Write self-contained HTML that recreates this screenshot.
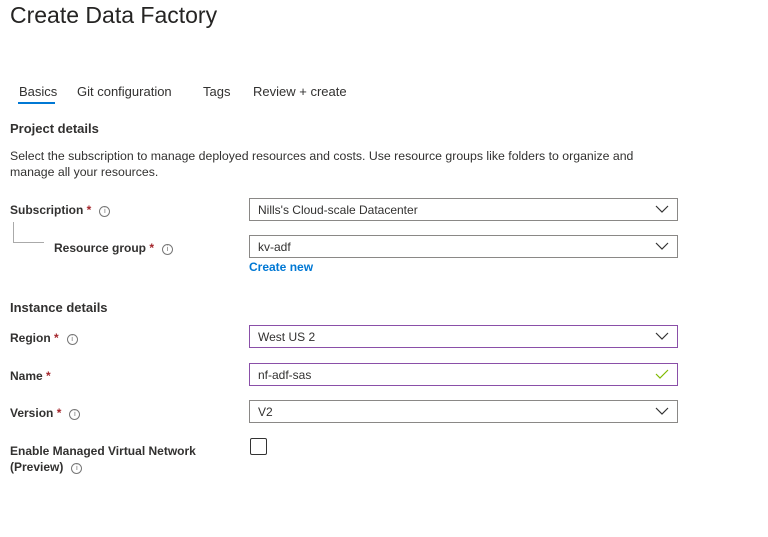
<!DOCTYPE html>
<html><head><style>
body{margin:0;width:768px;height:537px;background:#fff;font-family:"Liberation Sans",sans-serif;color:#323130;position:relative;overflow:hidden}
.a{position:absolute;white-space:nowrap}
h1{position:absolute;left:10px;top:2px;margin:0;font-size:23px;font-weight:normal;color:#252423}
.t{font-size:13px;top:84px}
.lbl{font-size:12px;font-weight:bold;color:#323130}
.req{color:#a4262c}
.info{display:inline-block;width:9px;height:9px;border:1px solid #777;border-radius:50%;font-size:7px;line-height:9px;text-align:center;color:#666;font-weight:normal;vertical-align:1px;margin-left:8px}
.box{position:absolute;left:249px;height:21px;border:1px solid #8a8886;font-size:12px;line-height:22px;padding-left:8px;box-sizing:content-box;width:419px}
.box.p{border-color:#8a4fa8}
.chev{position:absolute;right:8px;top:5px}
</style></head><body>
<h1>Create Data Factory</h1>
<div class="a t" style="left:19px;color:#323130">Basics</div>
<div class="a" style="left:18px;top:102px;width:37px;height:2px;background:#0078d4"></div>
<div class="a t" style="left:77px">Git configuration</div>
<div class="a t" style="left:203px">Tags</div>
<div class="a t" style="left:253px">Review + create</div>
<div class="a" style="left:10px;top:121px;font-size:13px;font-weight:bold">Project details</div>
<div class="a" style="left:10px;top:148px;font-size:12.3px;line-height:16px;white-space:normal;width:640px">Select the subscription to manage deployed resources and costs. Use resource groups like folders to organize and manage all your resources.</div>
<div class="a lbl" style="left:10px;top:203px">Subscription <span class="req">*</span><span class="info">i</span></div>
<div class="a" style="left:13px;top:222px;width:30px;height:20px;border-left:1px solid #aaa;border-bottom:1px solid #aaa"></div>
<div class="a lbl" style="left:54px;top:241px">Resource group <span class="req">*</span><span class="info">i</span></div>
<div class="box" style="top:198px">Nills's Cloud-scale Datacenter<svg class="chev" width="14" height="10"><path d="M1 2l6 6 6-6" fill="none" stroke="#333" stroke-width="1.2"/></svg></div>
<div class="box" style="top:235px">kv-adf<svg class="chev" width="14" height="10"><path d="M1 2l6 6 6-6" fill="none" stroke="#333" stroke-width="1.2"/></svg></div>
<div class="a" style="left:249px;top:260px;font-size:12px;color:#0078d4;font-weight:bold">Create new</div>
<div class="a" style="left:10px;top:300px;font-size:13px;font-weight:bold">Instance details</div>
<div class="a lbl" style="left:10px;top:331px">Region <span class="req">*</span><span class="info">i</span></div>
<div class="box p" style="top:325px">West US 2<svg class="chev" width="14" height="10"><path d="M1 2l6 6 6-6" fill="none" stroke="#333" stroke-width="1.2"/></svg></div>
<div class="a lbl" style="left:10px;top:369px">Name <span class="req">*</span></div>
<div class="box p" style="top:363px">nf-adf-sas<svg class="chev" width="14" height="10"><path d="M1 5l4 4 8-8" fill="none" stroke="#7fba00" stroke-width="1.2"/></svg></div>
<div class="a lbl" style="left:10px;top:406px">Version <span class="req">*</span><span class="info">i</span></div>
<div class="box" style="top:400px">V2<svg class="chev" width="14" height="10"><path d="M1 2l6 6 6-6" fill="none" stroke="#333" stroke-width="1.2"/></svg></div>
<div class="a lbl" style="left:10px;top:443px;line-height:16px">Enable Managed Virtual Network<br>(Preview)<span class="info">i</span></div>
<div class="a" style="left:250px;top:438px;width:15px;height:15px;border:1px solid #333;border-radius:2px"></div>
</body></html>
